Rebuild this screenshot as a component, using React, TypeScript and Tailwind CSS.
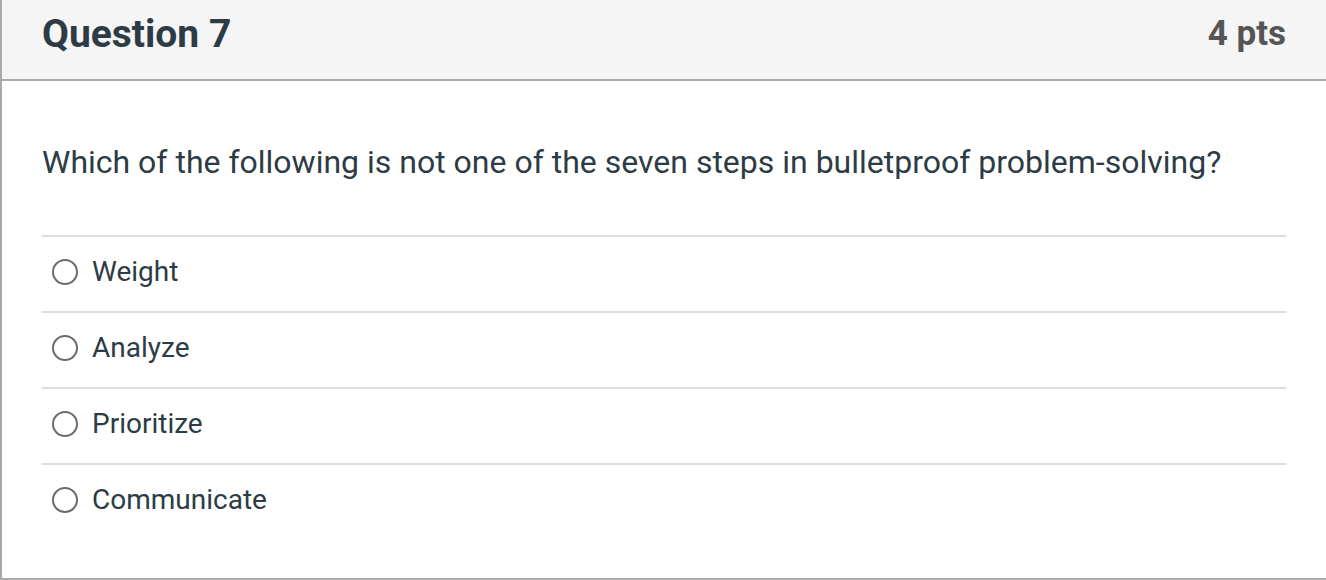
import React from 'react';

const options = ['Weight', 'Analyze', 'Prioritize', 'Communicate'];

export default function App() {
    return (
        <div className="w-[1326px] h-[580px] bg-white font-['Roboto',sans-serif] overflow-hidden">
            <div className="h-[580px] border-l-2 border-b-2 border-[#a9a9a9] flex flex-col">
                <div className="h-[81px] shrink-0 bg-[#f5f5f5] border-b-2 border-[#a9a9a9] flex items-center justify-between pl-[40px] pr-[40px] pb-[10px]">
                    <h2 className="text-[39px] font-bold text-[#2d3b45]">Question 7</h2>
                    <span className="text-[35px] font-bold text-[#555555]">4 pts</span>
                </div>

                <div className="pl-[40px] pr-[40px] pt-[59px]">
                    <p className="text-[32px] leading-[45px] text-[#2d3b45]">
                        Which of the following is not one of the seven steps in bulletproof problem-solving?
                    </p>

                    <div className="mt-[50px]">
                        {options.map((option) => (
                            <label
                                key={option}
                                className="h-[76px] border-t-2 border-[#dddddd] flex items-center gap-[14px] pl-[10px] pb-[4px] cursor-pointer"
                            >
                                <span className="w-[26px] h-[26px] rounded-full border-2 border-[#6b6b6b] bg-white shrink-0" />
                                <span className="text-[28px] text-[#2d3b45]">{option}</span>
                            </label>
                        ))}
                    </div>
                </div>
            </div>
        </div>
    );
}
